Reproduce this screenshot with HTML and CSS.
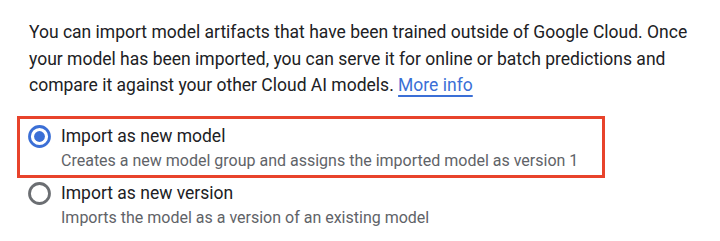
FILE: index.html
```html
<!DOCTYPE html>
<html>
<head>
<meta charset="utf-8">
<link rel="stylesheet" href="styles.css">
</head>
<body>
<div class="page">
  <p class="intro">You can import model artifacts that have been trained outside of Google Cloud. Once your model has been imported, you can serve it for online or batch predictions and compare it against your other Cloud AI models. <a class="link" href="#">More info</a></p>
  <div class="options">
    <div class="option highlight">
      <span class="radio">
        <svg width="23" height="23" viewBox="0 0 23 23"><circle cx="11.5" cy="11.5" r="10" fill="none" stroke="#3b6fd6" stroke-width="2.8"/><circle cx="11.5" cy="11.5" r="5.4" fill="#3b6fd6"/></svg>
      </span>
      <div class="texts">
        <div class="label">Import as new model</div>
        <div class="hint">Creates a new model group and assigns the imported model as version 1</div>
      </div>
    </div>
    <div class="option plain">
      <span class="radio">
        <svg width="23" height="23" viewBox="0 0 23 23"><circle cx="11.5" cy="11.5" r="10" fill="none" stroke="#6b6e72" stroke-width="2.8"/></svg>
      </span>
      <div class="texts">
        <div class="label">Import as new version</div>
        <div class="hint">Imports the model as a version of an existing model</div>
      </div>
    </div>
  </div>
</div>
</body>
</html>
```
FILE: styles.css
```css
html, body {
  margin: 0;
  padding: 0;
  background: #ffffff;
}
.page {
  width: 720px;
  height: 241px;
  font-family: Roboto, "Liberation Sans", sans-serif;
  color: #202124;
  padding-top: 19px;
  box-sizing: border-box;
}
.intro {
  margin: 0 0 0 29px;
  width: 680px;
  font-size: 17.5px;
  line-height: 26.67px;
}
.link {
  color: #3b6fd6;
  text-decoration: underline;
  text-underline-offset: 4px;
  text-decoration-thickness: 1.5px;
}
.options {
  margin: 17px 0 0 17px;
  width: 588px;
}
.option {
  display: flex;
  align-items: flex-start;
}
.option.highlight {
  border: 3px solid #e8432b;
  padding: 4px 8px 4px 8px;
}
.option.plain {
  margin-top: 2px;
  padding-left: 11px;
}
.radio {
  width: 23px;
  height: 26.67px;
  display: flex;
  align-items: center;
  flex: none;
}
.radio svg {
  display: block;
}
.texts {
  margin-left: 10px;
}
.label {
  font-size: 17.5px;
  line-height: 26.67px;
  color: #202124;
}
.hint {
  font-size: 16px;
  line-height: 21.33px;
  color: #5f6368;
}
```
